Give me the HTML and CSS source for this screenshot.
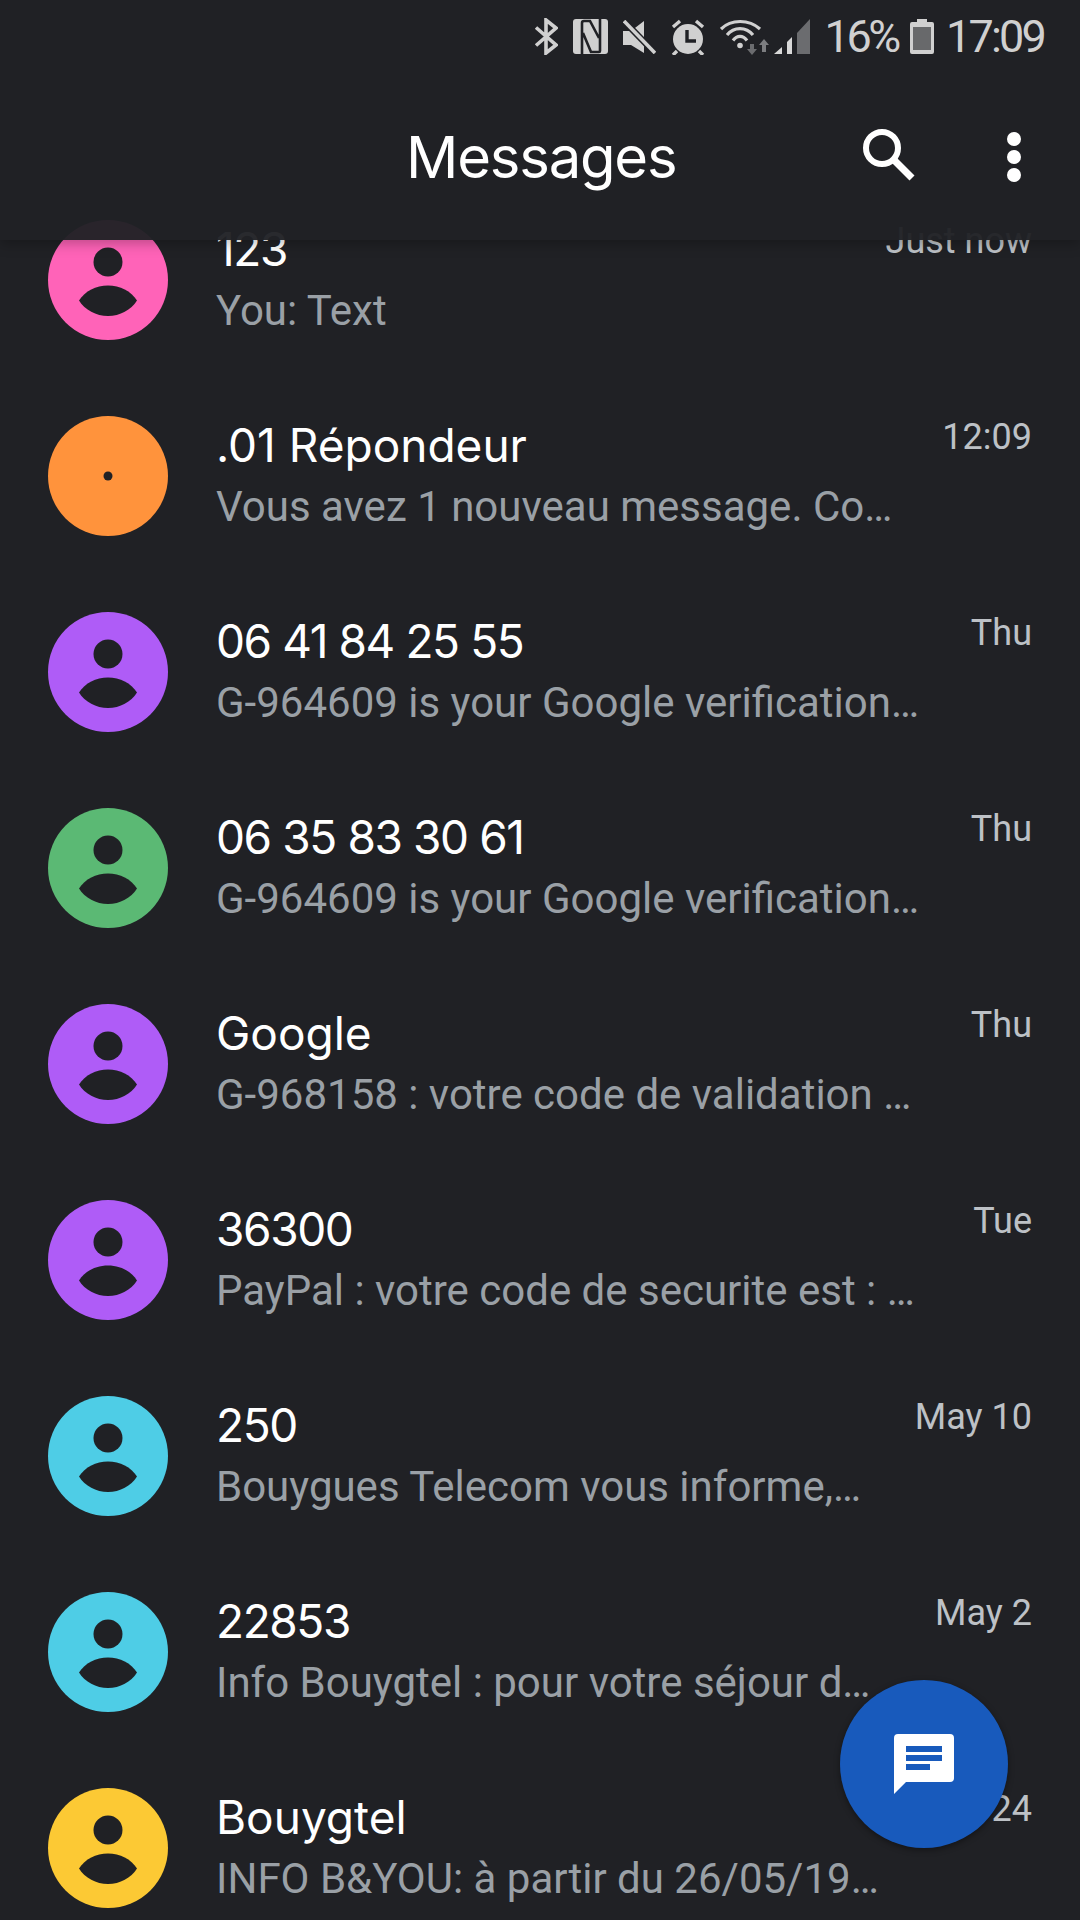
FILE: index.html
```html
<!DOCTYPE html>
<html>
<head>
  <title>Messages</title>
  <link rel="stylesheet" href="styles.css">
</head>
<body>

  <svg class="defs" width="0" height="0">
    <symbol id="person" viewBox="0 0 120 120">
      <circle cx="60" cy="42" r="14.500"/>
      <path d="M31 80.500 C37 71 48 65.500 60 65.500 C72 65.500 83 71 89 80.500 C83 90 72 96 60 96 C48 96 37 90 31 80.500 Z"/>
    </symbol>
  </svg>

  <!-- Status + app bar -->
  <header class="top">
    <div class="status">
      <svg class="st-icon" width="24" height="37" viewBox="0 0 24 37"><path d="M2 9.500 L22 27 L12 35 L12 2 L22 10 L2 27.500" fill="none" stroke="#d0d0d0" stroke-width="3.600"/></svg>
      <svg class="st-icon" width="35" height="35" viewBox="0 0 35 35"><rect width="35" height="35" rx="3" fill="#d0d0d0"/><path d="M9 35 V4 Q9 2 11 2 H17 L26 19 M27 0 V32 Q27 33 26 33 H18 L10 14" fill="none" stroke="#202125" stroke-width="2.600"/></svg>
      <svg class="st-icon" width="33" height="34" viewBox="0 0 33 34"><path d="M0 11 H8 L21 1 V33 L8 25 H0 Z" fill="#d0d0d0"/><path d="M1 1 L31 32" stroke="#202125" stroke-width="6.500"/><path d="M1 1 L32 33" stroke="#d0d0d0" stroke-width="3.600"/></svg>
      <svg class="st-icon" width="34" height="36" viewBox="0 0 34 36"><circle cx="17" cy="20" r="15" fill="#d0d0d0"/><path d="M2 8 L9 2 M32 8 L25 2 M6 32 L2 36 M28 32 L32 36" stroke="#d0d0d0" stroke-width="3.400"/><path d="M16 11 V22 H25" fill="none" stroke="#202125" stroke-width="3.400"/></svg>
      <svg class="st-icon wifi" width="49" height="36" viewBox="0 0 49 36"><path d="M1 10 C11 0 29 0 40 10 M7 16 C14 7.500 26 7.500 33 16 M13 21.500 C17 16 23 16 27 21.500" fill="none" stroke="#d0d0d0" stroke-width="3.200"/><circle cx="20" cy="26.500" r="2.800" fill="#d0d0d0"/><path d="M30 25 h4 v5 h3 l-5 6 l-5 -6 h3 Z" fill="#6b6c6f"/><path d="M42 33 h4 v-7 h3 l-5 -6 l-5 6 h3 Z" fill="#7c7d80"/></svg>
      <svg class="st-icon signal" width="36" height="35" viewBox="0 0 36 35"><path d="M0 35 L8 28 V35 Z" fill="#d8d8d8"/><path d="M13 23 L18 18 V35 H13 Z" fill="#d8d8d8"/><path d="M23 14 L36 0 V35 H23 Z" fill="#6b6c6f"/></svg>
      <span class="pct">16%</span>
      <svg class="st-icon" width="24" height="35" viewBox="0 0 24 35"><path d="M7 0 H17 V3 H22 Q24 3 24 5 V33 Q24 35 22 35 H2 Q0 35 0 33 V5 Q0 3 2 3 H7 Z" fill="#d0d0d0"/><rect x="3" y="8" width="18" height="23" fill="#68696b"/></svg>
      <span class="clock">17:09</span>
    </div>
    <div class="appbar">
      <h1 class="appbar-title">Messages</h1>
      <svg class="search" width="54" height="54" viewBox="0 0 54 54"><circle cx="21" cy="21" r="16" fill="none" stroke="#fff" stroke-width="6"/><path d="M33 33 L51 51" stroke="#fff" stroke-width="7"/></svg>
      <div class="more"><i></i><i></i><i></i></div>
    </div>
  </header>

  <main class="list">

    <div class="row">
      <svg class="avatar pink"><use href="#person"/></svg>
      <div class="row-text">
        <div class="row-line"><span class="name num">123</span><span class="when">Just now</span></div>
        <div class="preview">You: Text</div>
      </div>
    </div>

    <div class="row">
      <svg class="avatar orange" viewBox="0 0 120 120"><circle cx="60" cy="60" r="4.500"/></svg>
      <div class="row-text">
        <div class="row-line"><span class="name">.01 Répondeur</span><span class="when">12:09</span></div>
        <div class="preview">Vous avez 1 nouveau message. Co…</div>
      </div>
    </div>

    <div class="row">
      <svg class="avatar purple"><use href="#person"/></svg>
      <div class="row-text">
        <div class="row-line"><span class="name num">06 41 84 25 55</span><span class="when">Thu</span></div>
        <div class="preview">G-964609 is your Google verification…</div>
      </div>
    </div>

    <div class="row">
      <svg class="avatar green"><use href="#person"/></svg>
      <div class="row-text">
        <div class="row-line"><span class="name num">06 35 83 30 61</span><span class="when">Thu</span></div>
        <div class="preview">G-964609 is your Google verification…</div>
      </div>
    </div>

    <div class="row">
      <svg class="avatar purple"><use href="#person"/></svg>
      <div class="row-text">
        <div class="row-line"><span class="name">Google</span><span class="when">Thu</span></div>
        <div class="preview">G-968158 : votre code de validation …</div>
      </div>
    </div>

    <div class="row">
      <svg class="avatar purple"><use href="#person"/></svg>
      <div class="row-text">
        <div class="row-line"><span class="name num">36300</span><span class="when">Tue</span></div>
        <div class="preview">PayPal : votre code de securite est : …</div>
      </div>
    </div>

    <div class="row">
      <svg class="avatar cyan"><use href="#person"/></svg>
      <div class="row-text">
        <div class="row-line"><span class="name num">250</span><span class="when">May 10</span></div>
        <div class="preview">Bouygues Telecom vous informe,…</div>
      </div>
    </div>

    <div class="row">
      <svg class="avatar cyan"><use href="#person"/></svg>
      <div class="row-text">
        <div class="row-line"><span class="name num">22853</span><span class="when">May 2</span></div>
        <div class="preview">Info Bouygtel : pour votre séjour d…</div>
      </div>
    </div>

    <div class="row">
      <svg class="avatar yellow"><use href="#person"/></svg>
      <div class="row-text">
        <div class="row-line"><span class="name">Bouygtel</span><span class="when">Apr 24</span></div>
        <div class="preview">INFO B&amp;YOU: à partir du 26/05/19…</div>
      </div>
    </div>

  </main>

  <!-- compose button -->
  <button class="fab">
    <svg width="60" height="60" viewBox="0 0 60 60"><path d="M4 0 H56 Q60 0 60 4 V44 Q60 48 56 48 H12 L0 60 V4 Q0 0 4 0 Z" fill="#fff"/><path d="M12 12 H48 V18 H12 Z M12 21 H48 V27 H12 Z M12 30 H36 V36 H12 Z" fill="#185abc"/></svg>
  </button>

</body>
</html>
```

FILE: styles.css
```css
html, body { margin: 0; height: 1920px; overflow: hidden; background: #202125; }
body       { position: relative; font-family: Roboto, sans-serif; color: #fff; }
.defs      { position: absolute; }

/* top: status bar + app bar */
.top {
  position: relative; z-index: 2;
  height: 240px;
  background: rgba(32, 33, 37, .96);
  box-shadow: 0 4px 12px rgba(0, 0, 0, .25);
}
.status {
  box-sizing: border-box; height: 76px; padding: 0 36px 3px 0;
  display: flex; align-items: center; justify-content: flex-end; gap: 15px;
  color: #d0d0d0; font-size: 45px; letter-spacing: -3.4px;
}
.st-icon { flex: none; }
.signal  { margin-left: -10px; }
.pct     { margin-right: -3px; }
.clock   { letter-spacing: -2.800px; margin-left: -3px; }

.appbar {
  height: 162px;
  display: flex; align-items: center;
  padding: 0 59px 0 406px;
}
.appbar-title { margin: 0; font-family: Inter, sans-serif; font-weight: 400; font-size: 58px; letter-spacing: -1.2px; flex: 1; }
.search  { margin: 0 92px 6px 0; }
.more    { display: flex; flex-direction: column; gap: 4px; }
.more i  { display: block; width: 14px; height: 14px; border-radius: 50%; background: #fff; }

/* conversation list */
.list { margin-top: -58px; }
.row  { height: 196px; display: flex; align-items: center; padding: 0 48px; }

.avatar { width: 120px; height: 120px; border-radius: 50%; flex: none; fill: #202125; }
.pink   { background: #ff63b8; }
.orange { background: #ff933c; }
.purple { background: #af5cf7; }
.green  { background: #5bb974; }
.cyan   { background: #4ecde6; }
.yellow { background: #fcc934; }

.row-text { margin-left: 48px; flex: 1; min-width: 0; }
.row-line { display: flex; justify-content: space-between; align-items: flex-start; height: 62px; margin-top: -5px; }
.name     { font-family: Inter, sans-serif; font-size: 46px; line-height: 62px; }
.num      { letter-spacing: -1.4px; }
.when     { font-size: 36px; line-height: 46px; color: #bdc1c6; }
.preview  { font-size: 42px; line-height: 52px; color: #9aa0a6; white-space: nowrap; margin-top: 5px; }

.fab {
  position: absolute; right: 72px; bottom: 72px;
  width: 168px; height: 168px; border: 0; border-radius: 50%; padding: 0;
  background: #185abc;
  box-shadow: 0 2px 6px rgba(0, 0, 0, .4);
  display: flex; align-items: center; justify-content: center;
  z-index: 3;
}
```
